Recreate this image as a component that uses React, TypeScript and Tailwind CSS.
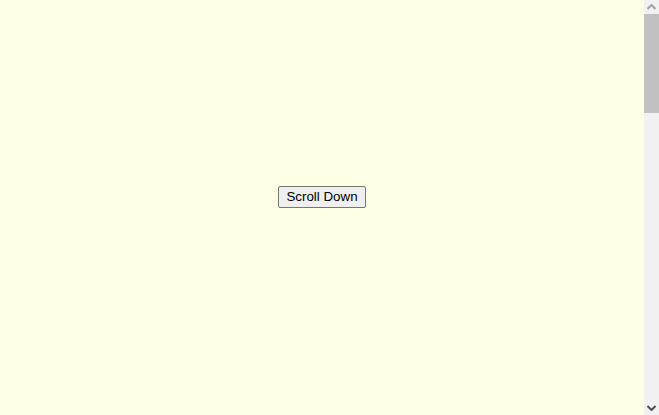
import React from 'react';

// Tall page with a single button; the scroll target sits far below the fold.
// The viewport's scrollbar is drawn by hand since the headless browser hides it.
const App: React.FC = () => {
    const scrollDown = (): void => {
        window.scrollTo({ top: document.body.scrollHeight, behavior: 'smooth' });
    };

    return (
        <div className="flex bg-[#ffffe6] font-['Liberation_Sans',Arial,sans-serif]">
            <main className="flex-1 min-h-[1615px] pt-[186px]">
                <div className="flex justify-center">
                    <button
                        onClick={scrollDown}
                        className="bg-[#efefef] border border-[#767676] rounded-[2px] px-[7px] py-px text-[13.333px] leading-[18px] text-black hover:bg-[#e5e5e5]"
                    >
                        Scroll Down
                    </button>
                </div>
            </main>

            {/* scrollbar */}
            <aside className="sticky top-0 h-[415px] w-[15px] shrink-0 bg-[#f1f1f1] flex flex-col">
                <div className="h-[14px] flex items-center justify-center">
                    <svg width="9" height="6" viewBox="0 0 9 6">
                        <path d="M0.5 5 L4.5 1 L8.5 5" fill="none" stroke="#a3a3a3" strokeWidth="2" />
                    </svg>
                </div>
                <div className="h-[99px] bg-[#c1c1c1]" />
                <div className="flex-1" />
                <div className="h-[14px] flex items-center justify-center">
                    <svg width="9" height="6" viewBox="0 0 9 6">
                        <path d="M0.5 1 L4.5 5 L8.5 1" fill="none" stroke="#505050" strokeWidth="2" />
                    </svg>
                </div>
            </aside>
        </div>
    );
};

export default App;
